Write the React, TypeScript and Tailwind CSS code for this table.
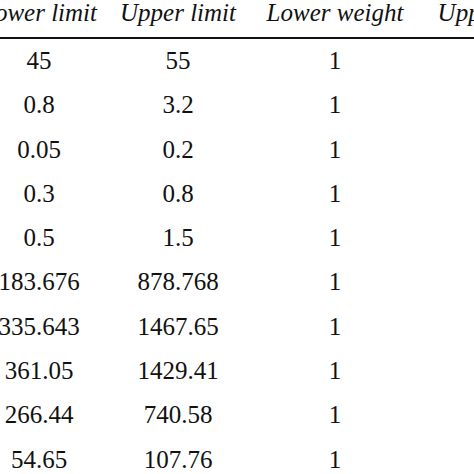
const rows: [string, string, string, string][] = [
  ['45', '55', '1', '1'],
  ['0.8', '3.2', '1', '1'],
  ['0.05', '0.2', '1', '1'],
  ['0.3', '0.8', '1', '1'],
  ['0.5', '1.5', '1', '1'],
  ['183.676', '878.768', '1', '1'],
  ['335.643', '1467.65', '1', '1'],
  ['361.05', '1429.41', '1', '1'],
  ['266.44', '740.58', '1', '1'],
  ['54.65', '107.76', '1', '1'],
]

const headers = ['Lower limit', 'Upper limit', 'Lower weight', 'Upper weight']

export default function App() {
  return (
    <div className="w-[474px] h-[474px] overflow-hidden bg-white text-[#111] [font-family:Tinos,'Liberation_Serif','DejaVu_Serif',serif] text-[25px]">
      <div className="ml-[-30px] w-[620px]">
        <div className="grid grid-cols-[138px_140px_174px_168px] leading-[25px] pb-[12px] border-b-2 border-[#111] italic">
          {headers.map((h) => (
            <div key={h} className="text-center whitespace-nowrap">{h}</div>
          ))}
        </div>

        {rows.map((r, i) => (
          <div key={i} className="grid grid-cols-[138px_140px_174px_168px] h-[44.3px] leading-[44.3px]">
            {r.map((v, j) => (
              <div key={j} className="text-center whitespace-nowrap">{v}</div>
            ))}
          </div>
        ))}
      </div>
    </div>
  )
}
